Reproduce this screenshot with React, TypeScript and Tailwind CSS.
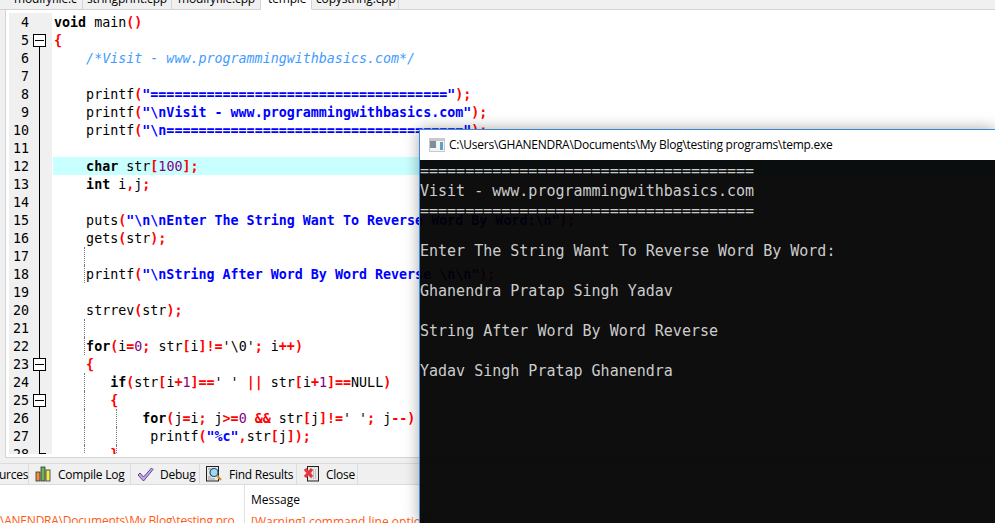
import React from 'react';

const eq = '='.repeat(37);

const CODE: { n: number; text: string; guides?: number[] }[] = [
  { n: 4, text: 'void main()' },
  { n: 5, text: '{' },
  { n: 6, text: '    /*Visit - www.programmingwithbasics.com*/' },
  { n: 7, text: '' },
  { n: 8, text: `    printf("${eq}");` },
  { n: 9, text: '    printf("\\nVisit - www.programmingwithbasics.com");' },
  { n: 10, text: `    printf("\\n${eq}");` },
  { n: 11, text: '' },
  { n: 12, text: '    char str[100];' },
  { n: 13, text: '    int i,j;' },
  { n: 14, text: '' },
  { n: 15, text: '    puts("\\n\\nEnter The String Want To Reverse Word By Word:\\n");' },
  { n: 16, text: '    gets(str);' },
  { n: 17, text: '', guides: [4] },
  { n: 18, text: '    printf("\\nString After Word By Word Reverse \\n\\n");', guides: [4] },
  { n: 19, text: '' },
  { n: 20, text: '    strrev(str);' },
  { n: 21, text: '', guides: [4] },
  { n: 22, text: "    for(i=0; str[i]!='\\0'; i++)", guides: [4] },
  { n: 23, text: '    {' },
  { n: 24, text: "       if(str[i+1]==' ' || str[i+1]==NULL)", guides: [4] },
  { n: 25, text: '       {', guides: [4] },
  { n: 26, text: "           for(j=i; j>=0 && str[j]!=' '; j--)", guides: [4, 8] },
  { n: 27, text: '            printf("%c",str[j]);', guides: [4, 8] },
  { n: 28, text: '       }', guides: [4, 8] },
];

const TOKEN = /(\/\*.*\*\/)|("(?:[^"\\]|\\.)*")|('(?:[^'\\]|\\.)*')|\b(void|char|int|for|if)\b|(\b\d+\b)|([(){}[\];,=!+\-|&>])|(\s+|[^\s"'(){}[\];,=!+\-|&>\d]+|.)/g;

function highlight(text: string) {
  const out: React.ReactNode[] = [];
  let i = 0;
  for (const m of text.matchAll(TOKEN)) {
    let cls = 'text-black';
    if (m[1]) cls = 'text-[#3f9bff] italic';
    else if (m[2]) cls = 'text-[#0000ff] font-bold';
    else if (m[4]) cls = 'text-black font-bold';
    else if (m[5]) cls = 'text-[#800080]';
    else if (m[6]) cls = 'text-[#ff0000] font-bold';
    out.push(<span key={i++} className={cls}>{m[0]}</span>);
  }
  return out;
}

const FoldCell = ({ n }: { n: number }) => {
  if (n < 5) return <div className="w-[13px]" />;
  const hasBox = n === 5 || n === 23 || n === 25;
  return (
    <div className="relative w-[13px] h-full">
      {n === 5 && <div className="absolute left-[6px] top-[9px] bottom-0 w-px bg-black" />}
      {n > 5 && n < 28 && <div className="absolute left-[6px] top-0 bottom-0 w-px bg-black" />}
      {n === 28 && <div className="absolute left-[6px] top-0 h-[9px] w-[7px] border-l border-b border-black" />}
      {hasBox && (
        <div className="absolute left-0 top-[3px] w-[13px] h-[13px] border border-black bg-white flex items-center justify-center">
          <div className="w-[9px] h-px bg-black" />
        </div>
      )}
    </div>
  );
};

const Row = ({ n, text, guides }: { n: number; text: string; guides?: number[] }) => (
  <div className="flex h-[18px] leading-[19px]">
    <div className="flex w-[43px] shrink-0 bg-[#f0f0f0] text-black">
      <div className="w-[20px] text-right">{n}</div>
      <div className="ml-[4px] h-[18px]">
        <FoldCell n={n} />
      </div>
    </div>
    <div className={`relative ml-[1px] pl-[1px] flex-1 h-[18px] whitespace-pre ${n === 12 ? 'bg-[#c8ffff]' : ''}`}>
      {guides?.map(g => (
        <span
          key={g}
          className="absolute top-0 bottom-0 border-l border-dotted border-[#777777]"
          style={{ left: g * 8 - 1 }}
        />
      ))}
      {highlight(text)}
    </div>
  </div>
);

const BarsIcon = () => (
  <svg width="17" height="16" viewBox="0 0 17 16">
    <rect x="1" y="6" width="4" height="9" fill="#f58a3c" stroke="#333" strokeWidth="0.8" />
    <rect x="6" y="1" width="4" height="14" fill="#6cb35a" stroke="#333" strokeWidth="0.8" />
    <rect x="11" y="4" width="4" height="11" fill="#f5ee4a" stroke="#333" strokeWidth="0.8" />
  </svg>
);

const CheckIcon = () => (
  <svg width="17" height="15" viewBox="0 0 17 15">
    <path d="M1 8 L3 6 L6.5 10 L14.5 1 L16 2.5 L6.5 14 Z" fill="#c9a6ef" stroke="#4b3a78" strokeWidth="0.9" strokeLinejoin="round" />
  </svg>
);

const FindIcon = () => (
  <svg width="17" height="16" viewBox="0 0 17 16">
    <rect x="0.5" y="0.5" width="12" height="14.5" fill="#e8e8e8" stroke="#222" />
    <path d="M2 3h3M2 11h3M2 13h7" stroke="#999" />
    <circle cx="8" cy="6.5" r="4" fill="#9fd8f5" stroke="#26506e" strokeWidth="1.2" />
    <path d="M11 9.5 L15 14" stroke="#c9962e" strokeWidth="2.2" />
  </svg>
);

const CloseIcon = () => (
  <svg width="17" height="16" viewBox="0 0 17 16">
    <rect x="4.5" y="0.5" width="11" height="14.5" fill="#e6e6e6" stroke="#222" />
    <path d="M8 4h6M8 6h6M8 8h6M8 10h6M8 12h6" stroke="#999" strokeDasharray="1 1" />
    <path d="M2 3 L9 11 M9 3 L2 11" stroke="#e8323c" strokeWidth="3.2" />
  </svg>
);

const BottomTab = ({ w, icon, label, gap }: { w: string; icon?: React.ReactNode; label: string; gap?: string }) => (
  <div className={`flex items-center h-full border-r border-[#dcdcdc] bg-[#f0f0f0] ${w} ${gap ?? ''}`}>
    {icon}
    <span className="mt-[2px] whitespace-nowrap tracking-[-0.25px]">{label}</span>
  </div>
);

const CONSOLE = [
  eq,
  'Visit - www.programmingwithbasics.com',
  eq,
  '',
  'Enter The String Want To Reverse Word By Word:',
  '',
  'Ghanendra Pratap Singh Yadav',
  '',
  'String After Word By Word Reverse',
  '',
  'Yadav Singh Pratap Ghanendra',
];

const TOP_TABS = [
  { label: 'modifyfile.c', w: 'w-[83px]', pl: 'pl-[14px]' },
  { label: 'stringprint.cpp', w: 'w-[89px]', pl: 'pl-[4px]' },
  { label: 'modifyfile.cpp', w: 'w-[89px]', pl: 'pl-[6px]' },
  { label: 'temple', w: 'w-[51px] bg-white border-b-white', pl: 'pl-[7px]' },
  { label: 'copystring.cpp', w: 'w-[87px]', pl: 'pl-[4px]' },
];

export default function App() {
  return (
    <div className="relative w-[995px] h-[523px] overflow-hidden bg-[#f0f0f0] font-['Open_Sans',sans-serif] text-[12px] text-black">
      {/* file tabs */}
      <div className="flex h-[10px] overflow-hidden">
        {TOP_TABS.map(t => (
          <div key={t.label} className={`h-[10px] overflow-hidden border-b border-r border-[#d4d4d4] tracking-[-0.15px] ${t.w} ${t.pl}`}>
            <div className="-mt-[9px] leading-[16px] whitespace-nowrap">{t.label}</div>
          </div>
        ))}
        <div className="flex-1 border-b border-[#d4d4d4]" />
      </div>

      {/* editor */}
      <div className="ml-[5px] h-[448px] border-l border-b border-[#d4d4d4] bg-white pl-[3px] pt-[3px]">
        <div className="h-[441px] overflow-hidden font-['DejaVu_Sans_Mono',monospace] text-[13.33px]">
          {CODE.map(r => (
            <Row key={r.n} {...r} />
          ))}
        </div>
      </div>

      {/* message tabs */}
      <div className="mt-[5px] flex h-[22px] border-t border-[#dcdcdc] border-b">
        <BottomTab w="w-[30px]" label="urces" gap="-ml-px" />
        <BottomTab w="w-[102px]" label="Compile Log" gap="pl-[6px] gap-[6px]" icon={<BarsIcon />} />
        <BottomTab w="w-[69px]" label="Debug" gap="pl-[6px] gap-[6px]" icon={<CheckIcon />} />
        <BottomTab w="w-[97px]" label="Find Results" gap="pl-[6px] gap-[6px]" icon={<FindIcon />} />
        <BottomTab w="w-[61px]" label="Close" gap="pl-[6px] gap-[6px]" icon={<CloseIcon />} />
      </div>

      {/* message list */}
      <div className="flex h-[38px] bg-white overflow-hidden">
        <div className="w-[244px] shrink-0 overflow-hidden whitespace-nowrap pt-[28px] leading-[16px] tracking-[-0.22px] text-[#ff5a14]">
          \ANENDRA\Documents\My Blog\testing pro
        </div>
        <div className="flex-1 border-l border-[#e2e2e2] pl-[6px] pt-[6px] leading-[18px] whitespace-nowrap">
          <div>Message</div>
          <div className="mt-[4px] text-[#ff5a14]">[Warning] command line option</div>
        </div>
      </div>

      {/* console window on top of the IDE */}
      <div className="absolute left-[419px] top-[129px] w-[576px] h-[394px] border-l border-t border-[#3c8ad6] shadow-[0_0_14px_rgba(0,0,0,0.35)] flex flex-col">
        <div className="flex items-center h-[30px] bg-white pl-[9px] gap-[4px]">
          <svg width="16" height="14" viewBox="0 0 16 14">
            <rect x="0" y="0" width="16" height="14" fill="#c9c9c9" />
            <rect x="1" y="3" width="14" height="10" fill="#f4f4f4" />
            <rect x="1" y="3" width="6" height="7" fill="#7f8f9a" />
            <rect x="11" y="4" width="3" height="8" fill="#5aa0c8" />
          </svg>
          <span className="whitespace-nowrap tracking-[-0.25px]">C:\Users\GHANENDRA\Documents\My Blog\testing programs\temp.exe</span>
        </div>
        <div className="flex-1 bg-[#010101]/95 pt-[1px] font-['DejaVu_Sans_Mono',monospace] text-[15px] leading-[20px] text-[#cccccc] whitespace-pre">
          {CONSOLE.map((line, i) => (
            <div key={i} className="h-[20px]">{line}</div>
          ))}
        </div>
      </div>
    </div>
  );
}
